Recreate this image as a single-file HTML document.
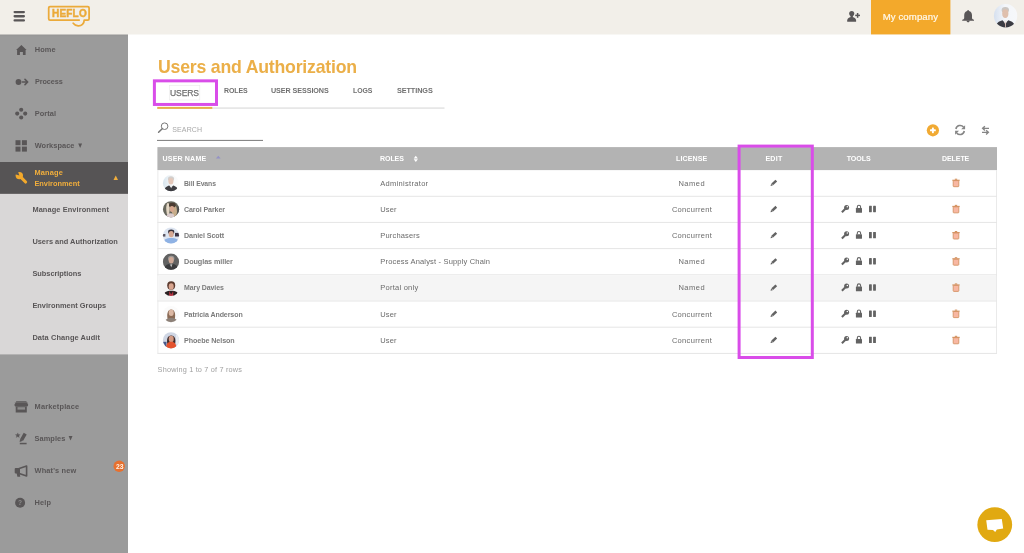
<!DOCTYPE html>
<html><head><meta charset="utf-8"><title>Users and Authorization</title>
<style>
*{box-sizing:border-box;margin:0;padding:0}
html,body{width:1024px;height:553px;overflow:hidden;background:#fff;font-family:"Liberation Sans",sans-serif;}
body{position:relative}
.t{position:absolute;white-space:nowrap;line-height:30px;transform-origin:0 50%}
svg{position:absolute;left:0;top:0;overflow:visible}
</style></head><body>
<svg width="1024" height="553" viewBox="0 0 1024 553">
<rect x="0.00" y="34.00" width="128.00" height="519.00" fill="#9b9b9b"/>
<rect x="0.00" y="34.40" width="128.00" height="0.90" fill="#939291"/>
<rect x="0.00" y="35.30" width="128.00" height="0.90" fill="#989898"/>
<rect x="0.00" y="0.00" width="1024.00" height="34.50" fill="#f2efe9"/>
<rect x="0.00" y="193.50" width="128.00" height="160.90" fill="#d9d7d7"/>
<rect x="0.00" y="162.00" width="128.00" height="31.80" fill="#565455"/>
<rect x="871.00" y="0.00" width="79.40" height="34.40" fill="#f3a92b"/>
<circle cx="119.2" cy="466.3" r="5.7" fill="#e8702e"/>
<rect x="157.00" y="107.55" width="287.50" height="1.00" fill="#d4d4d4"/>
<rect x="157.30" y="106.90" width="55.00" height="2.00" fill="#e6b04c"/>
<rect x="157.00" y="139.90" width="106.00" height="1.00" fill="#7a7a7a"/>
<rect x="157.40" y="147.10" width="839.60" height="23.00" fill="#b3b3b3"/>
<rect x="157.40" y="170.00" width="1.00" height="183.60" fill="#eaeaea"/>
<rect x="996.00" y="170.00" width="1.00" height="183.60" fill="#eaeaea"/>
<rect x="157.40" y="195.80" width="839.60" height="1.00" fill="#e5e5e5"/>
<rect x="157.40" y="221.90" width="839.60" height="1.00" fill="#e5e5e5"/>
<rect x="157.40" y="248.10" width="839.60" height="1.00" fill="#e5e5e5"/>
<rect x="157.40" y="274.30" width="839.60" height="1.00" fill="#e5e5e5"/>
<rect x="158.40" y="275.30" width="837.60" height="25.20" fill="#f5f5f5"/>
<rect x="157.40" y="300.50" width="839.60" height="1.00" fill="#e5e5e5"/>
<rect x="157.40" y="326.70" width="839.60" height="1.00" fill="#e5e5e5"/>
<rect x="157.40" y="352.90" width="839.60" height="1.00" fill="#e5e5e5"/>
<rect x="169.3" y="85.4" width="30.5" height="14.6" fill="none" stroke="#e9e9e9" stroke-width="0.6"/>
</svg>
<div id="txt" style="position:absolute;left:0;top:0;width:1024px;height:553px;will-change:transform">
<div class="t" style="left:52.00px;top:-1px;font-size:10.00px;letter-spacing:0.203px;color:#ebaa3a;font-weight:bold;-webkit-text-stroke:0.45px #ebaa3a;">HEFLO</div>
<div class="t" style="left:882.70px;top:2px;font-size:9.60px;letter-spacing:0.109px;color:#fff8ea;-webkit-text-stroke:0.2px #fff8ea;">My company</div>
<div class="t" style="left:34.70px;top:35px;font-size:7.40px;letter-spacing:0.147px;color:#595657;font-weight:bold;">Home</div>
<div class="t" style="left:34.70px;top:67px;font-size:7.40px;letter-spacing:-0.089px;color:#595657;font-weight:bold;transform:scaleX(0.9835);">Process</div>
<div class="t" style="left:34.70px;top:99px;font-size:7.40px;letter-spacing:0.066px;color:#595657;font-weight:bold;">Portal</div>
<div class="t" style="left:34.70px;top:131px;font-size:7.40px;letter-spacing:0.056px;color:#595657;font-weight:bold;">Workspace</div>
<div class="t" style="left:34.40px;top:158px;font-size:7.40px;letter-spacing:0.210px;color:#f1ae3c;font-weight:bold;">Manage</div>
<div class="t" style="left:34.40px;top:169px;font-size:7.40px;letter-spacing:0.012px;color:#f1ae3c;font-weight:bold;">Environment</div>
<div class="t" style="left:32.40px;top:195px;font-size:7.40px;letter-spacing:0.104px;color:#595657;font-weight:bold;">Manage Environment</div>
<div class="t" style="left:32.40px;top:227px;font-size:7.40px;letter-spacing:0.016px;color:#595657;font-weight:bold;">Users and Authorization</div>
<div class="t" style="left:32.40px;top:259px;font-size:7.40px;letter-spacing:-0.020px;color:#595657;font-weight:bold;">Subscriptions</div>
<div class="t" style="left:32.40px;top:291px;font-size:7.40px;letter-spacing:0.015px;color:#595657;font-weight:bold;">Environment Groups</div>
<div class="t" style="left:32.40px;top:323px;font-size:7.40px;letter-spacing:0.105px;color:#595657;font-weight:bold;">Data Change Audit</div>
<div class="t" style="left:34.60px;top:392px;font-size:7.40px;letter-spacing:0.172px;color:#595657;font-weight:bold;">Marketplace</div>
<div class="t" style="left:34.60px;top:424px;font-size:7.40px;letter-spacing:0.044px;color:#595657;font-weight:bold;">Samples</div>
<div class="t" style="left:34.60px;top:456px;font-size:7.40px;letter-spacing:0.133px;color:#595657;font-weight:bold;">What's new</div>
<div class="t" style="left:34.60px;top:488px;font-size:7.40px;letter-spacing:0.121px;color:#595657;font-weight:bold;">Help</div>
<div class="t" style="left:115.60px;top:452px;font-size:6.90px;letter-spacing:-0.083px;color:#fff4e8;font-weight:bold;transform:scaleX(0.9879);">23</div>
<div class="t" style="left:157.60px;top:52px;font-size:18.40px;letter-spacing:-0.221px;color:#ebaf48;font-weight:bold;transform:scaleX(0.9618);">Users and Authorization</div>
<div class="t" style="left:170.00px;top:78px;font-size:9.60px;letter-spacing:-0.115px;color:#6e6e6e;transform:scaleX(0.8922);-webkit-text-stroke:0.25px #6e6e6e;">USERS</div>
<div class="t" style="left:223.50px;top:76px;font-size:7.30px;letter-spacing:-0.088px;color:#707070;font-weight:bold;transform:scaleX(0.9598);">ROLES</div>
<div class="t" style="left:271.25px;top:76px;font-size:7.30px;letter-spacing:-0.088px;color:#707070;font-weight:bold;transform:scaleX(0.9858);">USER SESSIONS</div>
<div class="t" style="left:353.10px;top:76px;font-size:7.30px;letter-spacing:-0.088px;color:#707070;font-weight:bold;transform:scaleX(0.9500);">LOGS</div>
<div class="t" style="left:396.90px;top:76px;font-size:7.30px;letter-spacing:-0.086px;color:#707070;font-weight:bold;">SETTINGS</div>
<div class="t" style="left:172.20px;top:115px;font-size:7.00px;letter-spacing:0.145px;color:#a8a8a8;">SEARCH</div>
<div class="t" style="left:162.50px;top:144px;font-size:7.10px;letter-spacing:0.137px;color:#fff;font-weight:bold;">USER NAME</div>
<div class="t" style="left:380.25px;top:144px;font-size:7.10px;letter-spacing:-0.085px;color:#fff;font-weight:bold;transform:scaleX(0.9931);">ROLES</div>
<div class="t" style="left:676.10px;top:144px;font-size:7.10px;letter-spacing:0.071px;color:#fff;font-weight:bold;">LICENSE</div>
<div class="t" style="left:765.40px;top:144px;font-size:7.10px;letter-spacing:0.242px;color:#fff;font-weight:bold;">EDIT</div>
<div class="t" style="left:846.70px;top:144px;font-size:7.10px;letter-spacing:-0.082px;color:#fff;font-weight:bold;">TOOLS</div>
<div class="t" style="left:942.00px;top:144px;font-size:7.10px;letter-spacing:-0.085px;color:#fff;font-weight:bold;transform:scaleX(0.9898);">DELETE</div>
<div class="t" style="left:183.90px;top:169px;font-size:7.50px;letter-spacing:-0.090px;color:#7b7b7b;font-weight:bold;transform:scaleX(0.9133);">Bill Evans</div>
<div class="t" style="left:380.30px;top:169px;font-size:7.50px;letter-spacing:0.302px;color:#6b6b6b;">Administrator</div>
<div class="t" style="left:678.40px;top:169px;font-size:7.50px;letter-spacing:0.506px;color:#6b6b6b;">Named</div>
<div class="t" style="left:183.90px;top:195px;font-size:7.50px;letter-spacing:-0.090px;color:#7b7b7b;font-weight:bold;transform:scaleX(0.9400);">Carol Parker</div>
<div class="t" style="left:380.30px;top:195px;font-size:7.50px;letter-spacing:0.155px;color:#6b6b6b;">User</div>
<div class="t" style="left:671.90px;top:195px;font-size:7.50px;letter-spacing:0.311px;color:#6b6b6b;">Concurrent</div>
<div class="t" style="left:183.90px;top:221px;font-size:7.50px;letter-spacing:-0.090px;color:#7b7b7b;font-weight:bold;transform:scaleX(0.9492);">Daniel Scott</div>
<div class="t" style="left:380.30px;top:221px;font-size:7.50px;letter-spacing:0.169px;color:#6b6b6b;">Purchasers</div>
<div class="t" style="left:671.90px;top:221px;font-size:7.50px;letter-spacing:0.311px;color:#6b6b6b;">Concurrent</div>
<div class="t" style="left:183.90px;top:247px;font-size:7.50px;letter-spacing:-0.090px;color:#7b7b7b;font-weight:bold;transform:scaleX(0.9681);">Douglas miller</div>
<div class="t" style="left:380.30px;top:247px;font-size:7.50px;letter-spacing:0.175px;color:#6b6b6b;">Process Analyst - Supply Chain</div>
<div class="t" style="left:678.40px;top:247px;font-size:7.50px;letter-spacing:0.506px;color:#6b6b6b;">Named</div>
<div class="t" style="left:183.90px;top:273px;font-size:7.50px;letter-spacing:-0.090px;color:#7b7b7b;font-weight:bold;transform:scaleX(0.9306);">Mary Davies</div>
<div class="t" style="left:380.30px;top:273px;font-size:7.50px;letter-spacing:0.247px;color:#6b6b6b;">Portal only</div>
<div class="t" style="left:678.40px;top:273px;font-size:7.50px;letter-spacing:0.506px;color:#6b6b6b;">Named</div>
<div class="t" style="left:183.90px;top:300px;font-size:7.50px;letter-spacing:-0.090px;color:#7b7b7b;font-weight:bold;transform:scaleX(0.9397);">Patricia Anderson</div>
<div class="t" style="left:380.30px;top:300px;font-size:7.50px;letter-spacing:0.155px;color:#6b6b6b;">User</div>
<div class="t" style="left:671.90px;top:300px;font-size:7.50px;letter-spacing:0.311px;color:#6b6b6b;">Concurrent</div>
<div class="t" style="left:183.90px;top:326px;font-size:7.50px;letter-spacing:-0.090px;color:#7b7b7b;font-weight:bold;transform:scaleX(0.9548);">Phoebe Nelson</div>
<div class="t" style="left:380.30px;top:326px;font-size:7.50px;letter-spacing:0.155px;color:#6b6b6b;">User</div>
<div class="t" style="left:671.90px;top:326px;font-size:7.50px;letter-spacing:0.311px;color:#6b6b6b;">Concurrent</div>
<div class="t" style="left:157.60px;top:355px;font-size:7.30px;letter-spacing:0.194px;color:#a0a0a0;">Showing 1 to 7 of 7 rows</div>
</div>
<svg width="1024" height="553" viewBox="0 0 1024 553" style="left:0;top:0">
<rect x="13.5" y="10.90" width="11.5" height="2.3" rx="1.1" fill="#595657"/>
<rect x="13.5" y="15.10" width="11.5" height="2.3" rx="1.1" fill="#595657"/>
<rect x="13.5" y="19.25" width="11.5" height="2.3" rx="1.1" fill="#595657"/>
<path d="M79.2 20 H50 a1.3 1.3 0 0 1 -1.3 -1.3 V8 a1.3 1.3 0 0 1 1.3 -1.3 H87.8 a1.3 1.3 0 0 1 1.3 1.3 V18.7 a1.3 1.3 0 0 1 -1.3 1.3 H84.2 C84.3 23.5 81.5 26 78.2 25.8 C76 25.6 74.2 24.6 73.2 23.2" fill="none" stroke="#ebaa3a" stroke-width="1.75" stroke-linecap="round" stroke-linejoin="round"/>
<g fill="#595657"><circle cx="851.7" cy="13.6" r="2.55"/><rect x="850.5" y="15.4" width="2.4" height="2.4"/><path d="M847.2 21.7 v-1.3 c0-2.3 2-3.5 4.45-3.5 s4.45 1.2 4.45 3.5 v1.3 z"/><rect x="856.85" y="13" width="1.5" height="4.8" /><rect x="855.2" y="14.65" width="4.8" height="1.5"/></g>
<g fill="#595657"><path d="M968.1 10 c0.5 0 0.9 0.4 0.9 0.9 c1.9 0.5 3 2.1 3 4.3 v2.7 c0 0.8 0.5 1.2 2 1.8 v1.1 h-11.8 v-1.1 c1.5-0.6 2-1 2-1.8 v-2.7 c0-2.2 1.1-3.8 3-4.3 c0-0.5 0.4-0.9 0.9-0.9z"/><path d="M966.5 20.6 h3.2 a1.6 1.8 0 0 1 -3.2 0z"/></g>
<defs><clipPath id="cpa"><circle cx="1005.6" cy="15.8" r="11.7"/></clipPath><linearGradient id="bga" x1="0" x2="1" y1="0" y2="0"><stop offset="0" stop-color="#d3deee"/><stop offset="0.45" stop-color="#f3f6fa"/><stop offset="1" stop-color="#f7f8fa"/></linearGradient><filter id="bl" x="-10%" y="-10%" width="120%" height="120%"><feGaussianBlur stdDeviation="0.45"/></filter></defs>
<g clip-path="url(#cpa)"><rect x="993" y="3" width="26" height="26" fill="url(#bga)"/><g filter="url(#bl)"><ellipse cx="1005.3" cy="10" rx="3.7" ry="3" fill="#cbc6c2"/><ellipse cx="1005.3" cy="13.6" rx="3.1" ry="4.4" fill="#dfc0ae"/><path d="M995.5 28.5 c0-5.5 3.5-7.3 7-8.3 l2.9 3 l2.9-3 c3.5 1 7 2.8 7 8.3z" fill="#3b3b42"/><path d="M1003.6 20.6 l1.8 4.5 l1.8-4.5z" fill="#ece8e6"/><rect x="1005" y="22.5" width="0.9" height="5" fill="#d9b9b0"/></g></g>
<path d="M21.4 45 L26.6 49.9 H25.6 V55 H22.9 V51.9 H19.9 V55 H17.1 V49.9 H16.1 Z" fill="#595657"/>
<g fill="#595657" stroke="#595657"><circle cx="18.5" cy="82" r="2.9" stroke="none"/><path d="M22.4 82 H27.4 M25 79.4 L27.7 82 L25 84.6" fill="none" stroke-width="1.6" stroke-linecap="round" stroke-linejoin="round"/></g>
<circle cx="21.2" cy="109.7" r="2.05" fill="#595657"/>
<circle cx="17.2" cy="113.6" r="2.05" fill="#595657"/>
<circle cx="25.2" cy="113.6" r="2.05" fill="#595657"/>
<circle cx="21.2" cy="117.5" r="2.05" fill="#595657"/>
<rect x="15.5" y="140.2" width="5" height="5" fill="#595657"/>
<rect x="15.5" y="146.6" width="5" height="5" fill="#595657"/>
<rect x="21.9" y="140.2" width="5" height="5" fill="#595657"/>
<rect x="21.9" y="146.6" width="5" height="5" fill="#595657"/>
<g><path d="M20.3 176.6 L25.6 182" stroke="#f3a92b" stroke-width="3.1" stroke-linecap="round" fill="none"/><circle cx="19.3" cy="175.6" r="3.7" fill="#f3a92b"/><path d="M19.4 175.4 L17.2 169.5 L12.5 173.5 Z" fill="#575555"/></g>
<g fill="#595657"><path d="M16.3 401.2 H26.3 L28.2 404.7 c0 1.2 -0.9 1.9 -1.9 1.9 H16.3 c-1 0 -1.9 -0.7 -1.9 -1.9 Z"/><rect x="15.7" y="406.4" width="11.1" height="6.1"/><rect x="17.5" y="407.2" width="7.5" height="2.4" fill="#8c8b8b"/><rect x="14.6" y="402.5" width="13.4" height="0.5" fill="#7c7a7b"/></g>
<g><path d="M25.2 433.6 L21.6 440" stroke="#595657" stroke-width="3.5" fill="none"/><path d="M19.6 441.9 l0.5 -2.9 l2.9 1.7 z" fill="#595657"/><rect x="19.8" y="442.8" width="6.8" height="1.5" fill="#595657"/><path d="M17.8 432.9 l0.65 1.6 l1.75 0.15 l-1.35 1.1 l0.45 1.7 l-1.5 -0.95 l-1.5 0.95 l0.45 -1.7 l-1.35 -1.1 l1.75 -0.15 z" fill="#595657" stroke="#595657" stroke-width="0.3"/></g>
<g><rect x="14.7" y="467.9" width="4.8" height="5.6" rx="1" fill="#595657"/><path d="M16.6 473 h3 l0.7 3.8 h-2.9 z" fill="#595657"/><path d="M19.2 468.4 L26.6 466 V476 L19.2 473.4 Z" fill="none" stroke="#595657" stroke-width="1.6" stroke-linejoin="round"/></g>
<circle cx="20.1" cy="502.7" r="5" fill="#595657"/>
<text x="20.1" y="505.1" text-anchor="middle" font-family="Liberation Sans, sans-serif" font-weight="bold" font-size="6.6" fill="#8e8d8d">?</text>
<g fill="none" stroke="#777" stroke-width="1"><circle cx="164.6" cy="126.2" r="3.3"/><path d="M162.2 128.7 L158.6 132.3" stroke-width="1.5" stroke-linecap="round"/></g>
<circle cx="932.9" cy="130.3" r="6.1" fill="#f1aa33"/><rect x="930" y="129.35" width="5.8" height="1.9" rx="0.6" fill="#fff"/><rect x="931.95" y="127.4" width="1.9" height="5.8" rx="0.6" fill="#fff"/>
<g fill="none" stroke="#858585" stroke-width="1.55"><path d="M955.9 129 a4.3 4.3 0 0 1 7.6 -1.9"/><path d="M964.3 131 a4.3 4.3 0 0 1 -7.6 1.9"/></g><path d="M965.1 125.3 v3.9 h-3.9z M955.1 134.7 v-3.9 h3.9z" fill="#858585"/>
<g fill="none" stroke="#858585" stroke-width="1.35"><path d="M983 128.3 H989 M984.9 126.2 L982.6 128.3 L984.9 130.4"/><path d="M982 132.3 H988 M986.1 130.2 L988.4 132.3 L986.1 134.4"/></g>
<path d="M78.2 143.5 h3.9 l-1.95 4.4z M68.6 436.1 h3.9 l-1.95 4.4z" fill="#595657"/>
<path d="M113.5 179.9 h4.5 l-2.25 -4.4z" fill="#f1ae3c"/>
<circle cx="994.75" cy="524.7" r="17.4" fill="#e1a911"/><path d="M986.2 520.2 L1001.8 518.9 L1003.2 528.4 L996.9 529.6 L995.2 531.9 L993 530.1 L987.5 529.7 Z" fill="#fff"/>
<path d="M215.9 158.6 L218.3 155.8 L220.7 158.6 Z" fill="#9492c6"/>
<path d="M413.7 158.45 L415.8 155.7 L417.9 158.45 Z M413.7 159.15 L415.8 161.9 L417.9 159.15 Z" fill="#fff"/>
<defs><linearGradient id="bg1" x1="0" x2="1" y1="0" y2="0"><stop offset="0" stop-color="#d6e4ee"/><stop offset="0.5" stop-color="#f4f7f9"/><stop offset="1" stop-color="#fdfdfd"/></linearGradient></defs>
<clipPath id="av1"><circle cx="171.00" cy="183.20" r="8.10"/></clipPath><g clip-path="url(#av1)"><rect x="162.50" y="174.70" width="17" height="17" fill="url(#bg1)"/><g transform="translate(171.00 183.20)"><g filter="url(#bl)"><ellipse cx="0" cy="-4.4" rx="3.1" ry="2.6" fill="#d2cfcd"/><ellipse cx="-0.1" cy="-2" rx="2.5" ry="3.3" fill="#e4c8ba"/><path d="M-7 9 c0-5 3-6 5.2-6.8 l2 2.2 l2-2.2 c2.2 0.8 5.2 1.8 5.2 6.8z" fill="#3e3e42"/><path d="M-0.9 2.4 l1 3 l1-3z" fill="#ececec"/></g></g></g>
<clipPath id="av2"><circle cx="171.05" cy="209.35" r="8.10"/></clipPath><g clip-path="url(#av2)"><rect x="162.55" y="200.85" width="17" height="17" fill="#67675d"/><g transform="translate(171.05 209.35)"><g filter="url(#bl)"><ellipse cx="-3.1" cy="-0.5" rx="1.7" ry="6.2" fill="#e4d7c4"/><ellipse cx="3.4" cy="1.8" rx="2.5" ry="5.6" fill="#c6ad8a"/><ellipse cx="1.3" cy="-4.2" rx="3.3" ry="2.3" fill="#4c3b30"/><rect x="6.3" y="-3" width="2.2" height="8" fill="#4c4c4c"/><ellipse cx="0.9" cy="-0.4" rx="2.3" ry="3" fill="#d7a78f"/><ellipse cx="-0.6" cy="7.3" rx="3.8" ry="3.4" fill="#dbcccd"/></g></g></g>
<clipPath id="av3"><circle cx="171.00" cy="235.50" r="8.10"/></clipPath><g clip-path="url(#av3)"><rect x="162.50" y="227.00" width="17" height="17" fill="#dde5f1"/><rect x="175" y="232.9" width="6" height="3.6" fill="#3a3244"/><rect x="162" y="234.0" width="3.4" height="2.6" fill="#5a5560"/><g transform="translate(171.00 235.50)"><g filter="url(#bl)"><ellipse cx="0.2" cy="-3.6" rx="3.1" ry="2.3" fill="#35303a"/><ellipse cx="0.2" cy="-1.4" rx="2.5" ry="3.2" fill="#d6a893"/><path d="M-8 9 c0-5.5 3.5-6.6 8.2-6.6 s8.2 1.1 8.2 6.6z" fill="#8fb2e4"/></g></g></g>
<clipPath id="av4"><circle cx="171.00" cy="261.70" r="8.10"/></clipPath><g clip-path="url(#av4)"><rect x="162.50" y="253.20" width="17" height="17" fill="#626262"/><g transform="translate(171.00 261.70)"><g filter="url(#bl)"><ellipse cx="0.2" cy="-3.2" rx="3.2" ry="2.8" fill="#9a9896"/><ellipse cx="0.2" cy="-1.4" rx="2.5" ry="3.2" fill="#cfa997"/><path d="M-7 9 c0-5 3-6 5.2-6.6 l2 2.4 l2-2.4 c2.2 0.6 5.2 1.6 5.2 6.6z" fill="#3a3a3c"/><path d="M-0.7 2.8 l0.9 3 l0.9-3z" fill="#d8d8d8"/></g></g></g>
<clipPath id="av5"><circle cx="171.00" cy="287.90" r="8.10"/></clipPath><g clip-path="url(#av5)"><rect x="162.50" y="279.40" width="17" height="17" fill="#f4f3f3"/><g transform="translate(171.00 287.90)"><g filter="url(#bl)"><ellipse cx="0.2" cy="-2.4" rx="4" ry="4.2" fill="#5b3b2f"/><ellipse cx="0.2" cy="-1.4" rx="2.5" ry="3.2" fill="#d9a58f"/><path d="M-7.5 9 c0-5 3-6.2 7.7-6.2 s7.7 1.2 7.7 6.2z" fill="#2b2224"/><path d="M-1.8 3 l2 3.5 l2-3.5 v6 h-4z" fill="#b5323f"/></g></g></g>
<clipPath id="av6"><circle cx="171.00" cy="314.10" r="8.10"/></clipPath><g clip-path="url(#av6)"><rect x="162.50" y="305.60" width="17" height="17" fill="#fbfbfb"/><g transform="translate(171.00 314.10)"><g filter="url(#bl)"><path d="M-3.4 5 c-1-5 0-9.6 3.6-9.6 c3.6 0 4.6 4.6 3.6 9.6z" fill="#8a6a55"/><ellipse cx="0.2" cy="-1.4" rx="2.5" ry="3.2" fill="#dcb8a4"/><path d="M-6 9 c0-3.6 2-5 6.2-5 s6.2 1.4 6.2 5z" fill="#8d8178"/></g></g></g>
<clipPath id="av7"><circle cx="171.00" cy="340.30" r="8.10"/></clipPath><g clip-path="url(#av7)"><rect x="162.50" y="331.80" width="17" height="17" fill="#cfd6e4"/><rect x="162" y="341.79999999999995" width="4.5" height="7" fill="#4a5a8a"/><rect x="176" y="334.29999999999995" width="4" height="10" fill="#e8ecf2"/><g transform="translate(171.00 340.30)"><g filter="url(#bl)"><path d="M-3.6 4 c-1-5 0-8.8 3.8-8.8 c3.8 0 4.8 3.8 3.8 8.8z" fill="#3e2c2c"/><ellipse cx="0.2" cy="-1.4" rx="2.5" ry="3.2" fill="#d39a84"/><path d="M-5 9 c0-5.6 1.6-7.6 5.2-7.6 s5.2 2 5.2 7.6z" fill="#e4532f"/></g></g></g>
<g transform="translate(773.45 183.25) rotate(47)"><rect x="-1.25" y="-3.9" width="2.5" height="5.6" fill="#636363"/><path d="M-1.25 2 h2.5 l-1.25 2 z" fill="#636363"/></g>
<g transform="translate(956 183.00)"><rect x="-2.8" y="-2.4" width="5.6" height="6.1" rx="0.7" fill="#f8b7a2" stroke="#d59465" stroke-width="0.9"/><rect x="-3.7" y="-3.3" width="7.4" height="1.2" fill="#d59465"/><rect x="-1.2" y="-4.3" width="2.4" height="1.1" fill="#d4925f"/></g>
<g transform="translate(773.45 209.40) rotate(47)"><rect x="-1.25" y="-3.9" width="2.5" height="5.6" fill="#636363"/><path d="M-1.25 2 h2.5 l-1.25 2 z" fill="#636363"/></g>
<g transform="translate(956 209.15)"><rect x="-2.8" y="-2.4" width="5.6" height="6.1" rx="0.7" fill="#f8b7a2" stroke="#d59465" stroke-width="0.9"/><rect x="-3.7" y="-3.3" width="7.4" height="1.2" fill="#d59465"/><rect x="-1.2" y="-4.3" width="2.4" height="1.1" fill="#d4925f"/></g>
<g transform="translate(0 209.15)"><circle cx="846.6" cy="-1.6" r="2.5" fill="#636363"/><circle cx="847.3" cy="-2.3" r="0.75" fill="#fff"/><path d="M845.4 -0.4 L841.9 3.1" stroke="#636363" stroke-width="2.1" fill="none"/></g>
<g transform="translate(0 209.15)"><rect x="855.9" y="-1.1" width="6.1" height="4.6" rx="0.5" fill="#636363"/><path d="M857.3 -1 v-1.2 a1.65 1.65 0 0 1 3.3 0 v1.2" fill="none" stroke="#636363" stroke-width="1.1"/></g>
<g transform="translate(0 209.15)" fill="#636363"><rect x="869" y="-3.4" width="2.8" height="6.4" rx="0.4"/><rect x="873.1" y="-3.4" width="2.8" height="6.4" rx="0.4"/></g>
<g transform="translate(773.45 235.55) rotate(47)"><rect x="-1.25" y="-3.9" width="2.5" height="5.6" fill="#636363"/><path d="M-1.25 2 h2.5 l-1.25 2 z" fill="#636363"/></g>
<g transform="translate(956 235.30)"><rect x="-2.8" y="-2.4" width="5.6" height="6.1" rx="0.7" fill="#f8b7a2" stroke="#d59465" stroke-width="0.9"/><rect x="-3.7" y="-3.3" width="7.4" height="1.2" fill="#d59465"/><rect x="-1.2" y="-4.3" width="2.4" height="1.1" fill="#d4925f"/></g>
<g transform="translate(0 235.30)"><circle cx="846.6" cy="-1.6" r="2.5" fill="#636363"/><circle cx="847.3" cy="-2.3" r="0.75" fill="#fff"/><path d="M845.4 -0.4 L841.9 3.1" stroke="#636363" stroke-width="2.1" fill="none"/></g>
<g transform="translate(0 235.30)"><rect x="855.9" y="-1.1" width="6.1" height="4.6" rx="0.5" fill="#636363"/><path d="M857.3 -1 v-1.2 a1.65 1.65 0 0 1 3.3 0 v1.2" fill="none" stroke="#636363" stroke-width="1.1"/></g>
<g transform="translate(0 235.30)" fill="#636363"><rect x="869" y="-3.4" width="2.8" height="6.4" rx="0.4"/><rect x="873.1" y="-3.4" width="2.8" height="6.4" rx="0.4"/></g>
<g transform="translate(773.45 261.75) rotate(47)"><rect x="-1.25" y="-3.9" width="2.5" height="5.6" fill="#636363"/><path d="M-1.25 2 h2.5 l-1.25 2 z" fill="#636363"/></g>
<g transform="translate(956 261.50)"><rect x="-2.8" y="-2.4" width="5.6" height="6.1" rx="0.7" fill="#f8b7a2" stroke="#d59465" stroke-width="0.9"/><rect x="-3.7" y="-3.3" width="7.4" height="1.2" fill="#d59465"/><rect x="-1.2" y="-4.3" width="2.4" height="1.1" fill="#d4925f"/></g>
<g transform="translate(0 261.50)"><circle cx="846.6" cy="-1.6" r="2.5" fill="#636363"/><circle cx="847.3" cy="-2.3" r="0.75" fill="#fff"/><path d="M845.4 -0.4 L841.9 3.1" stroke="#636363" stroke-width="2.1" fill="none"/></g>
<g transform="translate(0 261.50)"><rect x="855.9" y="-1.1" width="6.1" height="4.6" rx="0.5" fill="#636363"/><path d="M857.3 -1 v-1.2 a1.65 1.65 0 0 1 3.3 0 v1.2" fill="none" stroke="#636363" stroke-width="1.1"/></g>
<g transform="translate(0 261.50)" fill="#636363"><rect x="869" y="-3.4" width="2.8" height="6.4" rx="0.4"/><rect x="873.1" y="-3.4" width="2.8" height="6.4" rx="0.4"/></g>
<g transform="translate(773.45 287.95) rotate(47)"><rect x="-1.25" y="-3.9" width="2.5" height="5.6" fill="#636363"/><path d="M-1.25 2 h2.5 l-1.25 2 z" fill="#636363"/></g>
<g transform="translate(956 287.70)"><rect x="-2.8" y="-2.4" width="5.6" height="6.1" rx="0.7" fill="#f8b7a2" stroke="#d59465" stroke-width="0.9"/><rect x="-3.7" y="-3.3" width="7.4" height="1.2" fill="#d59465"/><rect x="-1.2" y="-4.3" width="2.4" height="1.1" fill="#d4925f"/></g>
<g transform="translate(0 287.70)"><circle cx="846.6" cy="-1.6" r="2.5" fill="#636363"/><circle cx="847.3" cy="-2.3" r="0.75" fill="#fff"/><path d="M845.4 -0.4 L841.9 3.1" stroke="#636363" stroke-width="2.1" fill="none"/></g>
<g transform="translate(0 287.70)"><rect x="855.9" y="-1.1" width="6.1" height="4.6" rx="0.5" fill="#636363"/><path d="M857.3 -1 v-1.2 a1.65 1.65 0 0 1 3.3 0 v1.2" fill="none" stroke="#636363" stroke-width="1.1"/></g>
<g transform="translate(0 287.70)" fill="#636363"><rect x="869" y="-3.4" width="2.8" height="6.4" rx="0.4"/><rect x="873.1" y="-3.4" width="2.8" height="6.4" rx="0.4"/></g>
<g transform="translate(773.45 314.15) rotate(47)"><rect x="-1.25" y="-3.9" width="2.5" height="5.6" fill="#636363"/><path d="M-1.25 2 h2.5 l-1.25 2 z" fill="#636363"/></g>
<g transform="translate(956 313.90)"><rect x="-2.8" y="-2.4" width="5.6" height="6.1" rx="0.7" fill="#f8b7a2" stroke="#d59465" stroke-width="0.9"/><rect x="-3.7" y="-3.3" width="7.4" height="1.2" fill="#d59465"/><rect x="-1.2" y="-4.3" width="2.4" height="1.1" fill="#d4925f"/></g>
<g transform="translate(0 313.90)"><circle cx="846.6" cy="-1.6" r="2.5" fill="#636363"/><circle cx="847.3" cy="-2.3" r="0.75" fill="#fff"/><path d="M845.4 -0.4 L841.9 3.1" stroke="#636363" stroke-width="2.1" fill="none"/></g>
<g transform="translate(0 313.90)"><rect x="855.9" y="-1.1" width="6.1" height="4.6" rx="0.5" fill="#636363"/><path d="M857.3 -1 v-1.2 a1.65 1.65 0 0 1 3.3 0 v1.2" fill="none" stroke="#636363" stroke-width="1.1"/></g>
<g transform="translate(0 313.90)" fill="#636363"><rect x="869" y="-3.4" width="2.8" height="6.4" rx="0.4"/><rect x="873.1" y="-3.4" width="2.8" height="6.4" rx="0.4"/></g>
<g transform="translate(773.45 340.35) rotate(47)"><rect x="-1.25" y="-3.9" width="2.5" height="5.6" fill="#636363"/><path d="M-1.25 2 h2.5 l-1.25 2 z" fill="#636363"/></g>
<g transform="translate(956 340.10)"><rect x="-2.8" y="-2.4" width="5.6" height="6.1" rx="0.7" fill="#f8b7a2" stroke="#d59465" stroke-width="0.9"/><rect x="-3.7" y="-3.3" width="7.4" height="1.2" fill="#d59465"/><rect x="-1.2" y="-4.3" width="2.4" height="1.1" fill="#d4925f"/></g>
<g transform="translate(0 340.10)"><circle cx="846.6" cy="-1.6" r="2.5" fill="#636363"/><circle cx="847.3" cy="-2.3" r="0.75" fill="#fff"/><path d="M845.4 -0.4 L841.9 3.1" stroke="#636363" stroke-width="2.1" fill="none"/></g>
<g transform="translate(0 340.10)"><rect x="855.9" y="-1.1" width="6.1" height="4.6" rx="0.5" fill="#636363"/><path d="M857.3 -1 v-1.2 a1.65 1.65 0 0 1 3.3 0 v1.2" fill="none" stroke="#636363" stroke-width="1.1"/></g>
<g transform="translate(0 340.10)" fill="#636363"><rect x="869" y="-3.4" width="2.8" height="6.4" rx="0.4"/><rect x="873.1" y="-3.4" width="2.8" height="6.4" rx="0.4"/></g>
</svg>
<svg width="1024" height="553" viewBox="0 0 1024 553">
<rect x="154.40" y="80.85" width="62.10" height="23.60" fill="none" stroke="#d94de9" stroke-width="3.00"/>
<rect x="739.10" y="146.10" width="73.20" height="211.40" fill="none" stroke="#d94de9" stroke-width="3.00"/>
</svg>
</body></html>
